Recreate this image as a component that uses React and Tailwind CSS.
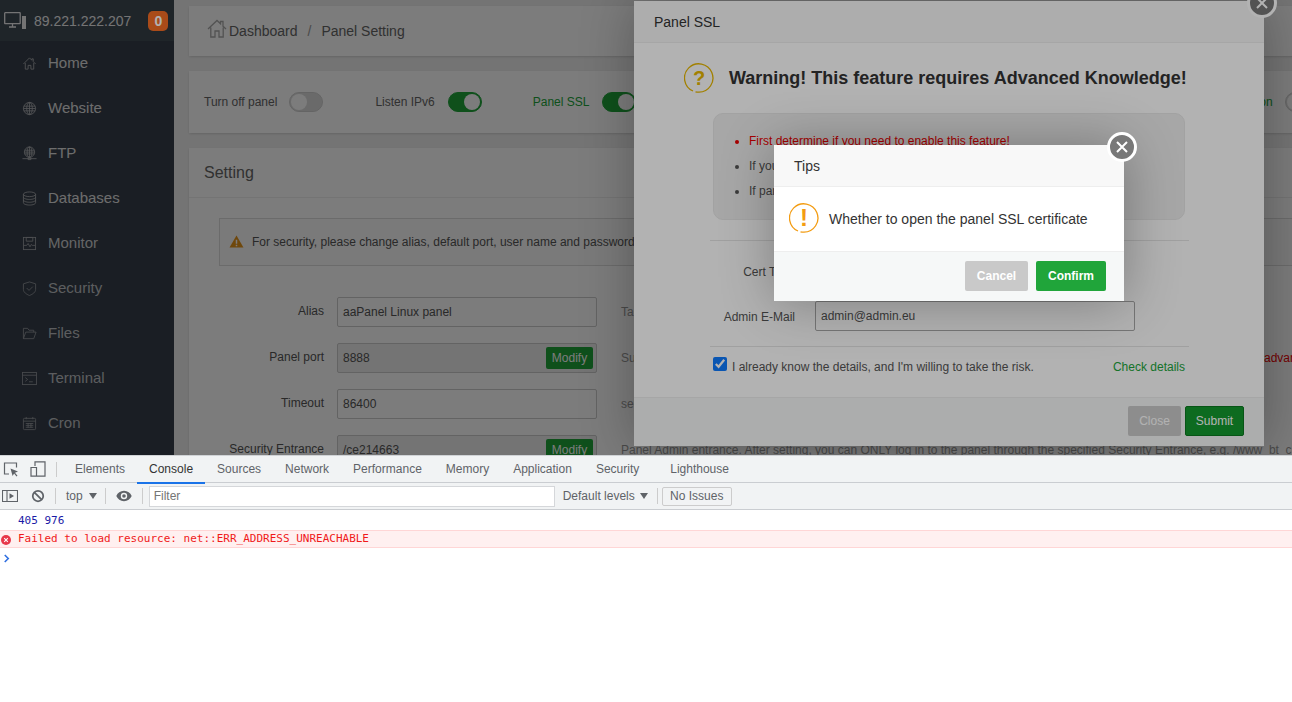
import React from 'react';

// sidebar icons, thin strokes like the panel's own set
const NavIcon = ({ name }) => {
  const paths = {
    home: <path d="M1.5 8.5 8 2l2.5 2.5V3H12v3l2.5 2.5M3.5 7.5V14h3v-4h3v4h3V7.5" />,
    website: (
      <>
        <circle cx="8" cy="8" r="6.5" />
        <ellipse cx="8" cy="8" rx="3" ry="6.5" />
        <path d="M8 1.5v13M2 5.5h12M1.5 8h13M2 10.5h12" />
      </>
    ),
    ftp: (
      <>
        <circle cx="8" cy="6.5" r="5.5" />
        <ellipse cx="8" cy="6.5" rx="2.5" ry="5.5" />
        <path d="M8 1v11M3 4.5h10M2.5 6.5h11M3 8.5h10M.5 13.5h15M6.5 12.5h3v2h-3z" />
      </>
    ),
    db: (
      <>
        <ellipse cx="8" cy="3.5" rx="6.5" ry="2.5" />
        <path d="M1.5 3.5v9c0 1.4 2.9 2.5 6.5 2.5s6.5-1.1 6.5-2.5v-9M1.5 6.5C1.5 7.9 4.4 9 8 9s6.5-1.1 6.5-2.5M1.5 9.5c0 1.4 2.9 2.5 6.5 2.5s6.5-1.1 6.5-2.5" />
      </>
    ),
    monitor: (
      <>
        <rect x="1.5" y="1.5" width="13" height="13" />
        <path d="M4.5 1.5h7v4h-7zM2 10h3l1.5-2 2 3.5L10 9l1 1h3" />
      </>
    ),
    security: <path d="M8 1 14.5 3v6c0 3-3 5-6.5 6.5C4.500 14 1.500 12 1.500 9V3zM5 7.500l2.500 2.500L11.500 6" />,
    files: <path d="M1.500 13.500v-11h4.500l1.500 2h5v2M1.500 13.500l2.500-7h11l-2.500 7z" />,
    terminal: (
      <>
        <rect x=".5" y="1.500" width="15" height="13" />
        <path d="M.5 4.500h15M3.500 7l2.500 2-2.500 2M7.500 11.500h4" />
      </>
    ),
    cron: (
      <>
        <rect x="1.500" y="2.500" width="13" height="12" rx="1" />
        <path d="M1.500 5.500h13M4.500 1v2.500M11.500 1v2.500M4 8h8M4 10h8M4 12h8M6.500 7.500v5M9.500 7.500v5" />
      </>
    ),
  };
  return (
    <svg viewBox="0 0 16 16" className="w-[15px] h-[15px] shrink-0 opacity-70" fill="none" stroke="currentColor" strokeWidth="0.9">
      {paths[name]}
    </svg>
  );
};

const navItems = [
  ['home', 'Home', 'text-[#e0e0e0]'],
  ['website', 'Website', 'text-[#e0e0e0]'],
  ['ftp', 'FTP', 'text-[#e0e0e0]'],
  ['db', 'Databases', 'text-[#e0e0e0]'],
  ['monitor', 'Monitor', 'text-[#cfd0d2]'],
  ['security', 'Security', 'text-[#bfc1c4]'],
  ['files', 'Files', 'text-[#bfc1c4]'],
  ['terminal', 'Terminal', 'text-[#bfc1c4]'],
  ['cron', 'Cron', 'text-[#bfc1c4]'],
];

const Toggle = ({ on, className = '' }) => (
  <span
    className={`relative inline-block w-[34px] h-[20px] rounded-full border shrink-0 ${
      on ? 'bg-[#20a53a] border-[#20a53a]' : 'bg-[#dcdcdc] border-[#cfcfcf]'
    } ${className}`}
  >
    <span className={`absolute top-px w-[16px] h-[16px] rounded-full bg-white ${on ? 'right-px' : 'left-px'}`}></span>
  </span>
);

const FormRow = ({ label, value, disabled, hint }) => (
  <div className="flex items-center h-[30px] mb-4 text-xs">
    <label className="w-[105px] text-right text-[#555] -mt-[2px] whitespace-nowrap">{label}</label>
    <div className={`relative ml-[13px] w-[260px] h-[30px] border border-[#ccc] rounded-[2px] flex items-center pl-[5px] text-[#555] ${disabled ? 'bg-[#eee]' : 'bg-white'}`}>
      {value}
      {disabled && (
        <span className="absolute right-[3px] top-[3px] h-[22px] w-[47px] rounded-[2px] bg-[#20a53a] text-white flex items-center justify-center">
          Modify
        </span>
      )}
    </div>
    <div className="ml-6 text-[#999] whitespace-nowrap">{hint}</div>
  </div>
);

// the layer style ring icon, gap at bottom left
const RingIcon = ({ color, mark, markClass }) => (
  <span className="relative w-[30px] h-[30px] shrink-0 flex items-center justify-center">
    <svg viewBox="0 0 30 30" className="absolute inset-0 w-[30px] h-[30px]" fill="none" stroke={color} strokeWidth="1.300">
      <path d="M9 28A14.200 14.200 0 1 1 15 29.200c-1.500 0-2.500-.1-3.500-.4" />
    </svg>
    <span className={`relative leading-none font-bold ${markClass}`} style={{ color }}>{mark}</span>
  </span>
);

const CloseDot = ({ className }) => (
  <span className={`absolute w-[30px] h-[30px] rounded-full bg-[#787878] border-[3px] border-white flex items-center justify-center ${className}`}>
    <svg viewBox="0 0 14 14" className="w-[14px] h-[14px]" fill="none" stroke="white" strokeWidth="2">
      <path d="M2 2l10 10M12 2 2 12" />
    </svg>
  </span>
);

const tabs = ['Elements', 'Console', 'Sources', 'Network', 'Performance', 'Memory', 'Application', 'Security'];

const DevTools = () => (
  <div className="flex-1 bg-white text-xs text-[#5f6368] border-t border-[#d0d3d6]">
    <div className="h-[27px] bg-[#f1f3f4] border-b border-[#cacdd1] flex items-stretch">
      <div className="flex items-center w-[57px] shrink-0 pl-[3px] gap-[11px] relative">
        <svg viewBox="0 0 16 16" className="w-[16px] h-[16px]" fill="none" stroke="#5f6368" strokeWidth="1.200">
          <path d="M6 13H1.500V2h12v4.500" />
          <path d="M7.500 7.500 15 10.500l-3 1.200 2.500 3-1 .8-2.400-3-1.500 2.500z" fill="#5f6368" stroke="none" />
        </svg>
        <svg viewBox="0 0 16 16" className="w-[16px] h-[16px]" fill="none" stroke="#5f6368" strokeWidth="1.200">
          <path d="M5 5V.8h10v14.400H1V6.500h5.500v8.700" />
        </svg>
        <span className="absolute right-0 top-[6px] h-[15px] w-px bg-[#ccc]"></span>
      </div>
      <div className="flex ml-[6px]">
        {tabs.map((t) => (
          <span
            key={t}
            className={`px-3 flex items-center ${t === 'Console' ? 'text-[#333] border-b-2 border-[#1a73e8] h-[28px]' : ''}`}
          >
            {t}
          </span>
        ))}
        <span className="ml-[7px] px-3 flex items-center">Lighthouse</span>
      </div>
    </div>
    <div className="h-[27px] bg-[#f1f3f4] border-b border-[#cacdd1] flex items-center">
      <svg viewBox="0 0 16 16" className="w-[16px] h-[16px] ml-[2px]" fill="none" stroke="#5f6368" strokeWidth="1.100">
        <path d="M.5 2.500h15v11H.5zM5 2.500v11" />
        <path d="M7.500 5.200v5.600L12 8z" fill="#5f6368" stroke="none" />
      </svg>
      <svg viewBox="0 0 16 16" className="w-[14px] h-[14px] ml-[13px]" fill="none" stroke="#5f6368" strokeWidth="2">
        <circle cx="8" cy="8" r="6" />
        <path d="M3.800 3.800l8.400 8.400" />
      </svg>
      <span className="ml-[10px] h-[16px] w-px bg-[#ccc]"></span>
      <span className="ml-[10px]">top</span>
      <span className="ml-[6px] w-0 h-0 border-x-[4px] border-x-transparent border-t-[6px] border-t-[#5f6368]"></span>
      <span className="ml-[8px] h-[16px] w-px bg-[#ccc]"></span>
      <svg viewBox="0 0 16 12" className="w-[16px] h-[12px] ml-[10px]" fill="#5f6368">
        <path d="M8 .8C4.500.8 1.600 2.900.3 6c1.300 3.100 4.200 5.200 7.700 5.200s6.400-2.100 7.700-5.200C14.400 2.900 11.500.8 8 .8zm0 8.400a3.200 3.200 0 1 1 0-6.400 3.200 3.200 0 0 1 0 6.400zM8 4.200a1.800 1.800 0 1 0 0 3.600 1.800 1.800 0 0 0 0-3.600z" />
      </svg>
      <span className="ml-[10px] h-[16px] w-px bg-[#ccc]"></span>
      <div className="ml-[6px] w-[406px] h-[21px] bg-white border border-[#d5d7da] flex items-center pl-[4px] text-[#757575]">Filter</div>
      <span className="ml-2">Default levels</span>
      <span className="ml-[5px] w-0 h-0 border-x-[4px] border-x-transparent border-t-[6px] border-t-[#5f6368]"></span>
      <span className="ml-[9px] h-[16px] w-px bg-[#ccc]"></span>
      <span className="ml-[4px] h-[19px] w-[70px] border border-[#ccc] rounded-[2px] flex items-center justify-center">No Issues</span>
    </div>
    <div className="font-['DejaVu_Sans_Mono',monospace] text-[11px]">
      <div className="h-[20px] pl-[18px] pt-[2px] flex items-center text-[#1a1aa6]">405 976</div>
      <div className="h-[18px] pl-[1px] pt-px flex items-center bg-[#fff0f0] border-y border-[#ffd6d6] text-[#f01a1a]">
        <svg viewBox="0 0 10 10" className="w-[10px] h-[10px] shrink-0">
          <circle cx="5" cy="5" r="5" fill="#e8384a" />
          <path d="M3.200 3.200l3.600 3.600M6.800 3.200 3.200 6.800" stroke="white" strokeWidth="1.100" />
        </svg>
        <span className="ml-[7px]">Failed to load resource: net::ERR_ADDRESS_UNREACHABLE</span>
      </div>
      <div className="h-[20px] pl-[3px] flex items-center">
        <svg viewBox="0 0 8 10" className="w-[7px] h-[9px]" fill="none" stroke="#2f6fe0" strokeWidth="1.800">
          <path d="M2 1l4 4-4 4" />
        </svg>
      </div>
    </div>
  </div>
);

const App = () => {
  return (
    <div className="w-[1292px] h-[702px] flex flex-col overflow-hidden bg-white font-['Liberation_Sans',sans-serif]">
      <div className="relative h-[455px] shrink-0 overflow-hidden flex bg-[#f0f0f0]">
        {/* sidebar */}
        <aside className="w-[174px] shrink-0 bg-[#373f4b]">
          <div className="h-[41px] bg-[#414c57] flex items-center pl-[4px]">
            <svg viewBox="0 0 22 17" className="w-[22px] h-[17px]" fill="none" stroke="#f0f0f0" strokeWidth="1.300">
              <rect x=".7" y=".7" width="15.500" height="11" rx=".5" />
              <path d="M5 15h7" strokeWidth="1.500" />
              <path d="M8.500 12v3" />
              <rect x="18" y="4" width="4" height="13" fill="#f0f0f0" stroke="none" />
            </svg>
            <span className="ml-[8px] text-sm text-[#f0f0f0]">89.221.222.207</span>
            <span className="relative z-[11] ml-[17px] w-[20px] h-[20px] rounded-[5px] bg-[#f26c25] text-white font-bold text-sm flex items-center justify-center">0</span>
          </div>
          <nav>
            {navItems.map(([icon, label, color]) => (
              <div key={label} className={`h-[45px] flex items-center pl-[22px] gap-[11px] text-[15px] ${color}`}>
                <NavIcon name={icon} />
                {label}
              </div>
            ))}
          </nav>
        </aside>

        {/* page */}
        <main className="flex-1 min-w-0 pl-[15px] pt-[6px] text-[#666]">
          <div className="w-[1400px]">
            <div className="h-[50px] bg-white shadow-sm flex items-center pl-[18px] text-sm">
              <svg viewBox="0 0 20 19" className="w-[20px] h-[19px] -mt-[5px]" fill="none" stroke="#aaa" strokeWidth="1.300">
                <path d="M1 10 10 1.500l3.500 3.300V2.500H16v4.700L19 10M3.800 8.500V18H8v-6h4v6h4.200V8.500" />
              </svg>
              <span className="ml-[2px]">Dashboard</span>
              <span className="ml-[10px] text-[#999]">/</span>
              <span className="ml-[10px]">Panel Setting</span>
            </div>

            <div className="mt-[15px] h-[62px] bg-white shadow-sm flex items-center pl-[15px] text-xs">
              <span>Turn off panel</span>
              <Toggle className="ml-[12px]" />
              <span className="ml-[52px]">Listen IPv6</span>
              <Toggle on className="ml-[13px]" />
              <span className="ml-[51px] text-[#20a53a]">Panel SSL</span>
              <Toggle on className="ml-[13px]" />
              <span className="ml-[504px] text-[#20a53a] whitespace-nowrap">BasicAuth authentication</span>
              <Toggle className="ml-3" />
            </div>

            <div className="mt-[15px] h-[400px] bg-white shadow-sm">
              <div className="h-[50px] border-b border-[#eee] flex items-center pl-[15px] text-base">Setting</div>
              <div className="pt-[20px] pl-[30px]">
                <div className="h-[48px] border border-[#ddd] bg-[#fbfbfb] flex items-center pl-[9px] mr-[30px] text-xs text-[#555]">
                  <svg viewBox="0 0 16 14" className="w-[15px] h-[13px] -mt-[2px]">
                    <path d="M8 .5 15.500 13.500H.5z" fill="#e6941a" />
                    <path d="M7.200 5h1.600v4.500H7.200zM7.200 10.500h1.600V12H7.200z" fill="white" />
                  </svg>
                  <span className="ml-[8px]">For security, please change alias, default port, user name and password</span>
                </div>
                <div className="mt-[31px]">
                  <FormRow label="Alias" value="aaPanel Linux panel" hint="Tag of this panel" />
                  <FormRow
                    label="Panel port"
                    value="8888"
                    disabled
                    hint={
                      <span className="flex">
                        <span className="w-[643px]">Suggested port range 8888 to 65535, note: if the server has a security group, please release it in</span>
                        <span className="text-[#e00]">advance</span>
                      </span>
                    }
                  />
                  <FormRow label="Timeout" value="86400" hint="seconds" />
                  <FormRow
                    label="Security Entrance"
                    value="/ce214663"
                    disabled
                    hint="Panel Admin entrance. After setting, you can ONLY log in to the panel through the specified Security Entrance, e.g. /www_bt_cn"
                  />
                </div>
              </div>
            </div>
          </div>
        </main>

        {/* first layer shade */}
        <div className="absolute inset-0 z-10 bg-black/30"></div>

        {/* Panel SSL dialog */}
        <div className="absolute z-20 left-[634px] top-px w-[630px] h-[445px] bg-white text-[#555] shadow-[1px_1px_50px_rgba(0,0,0,0.3)] flex flex-col">
          <div className="h-[42px] shrink-0 bg-[#f8f8f8] border-b border-[#eee] flex items-center pl-5 text-sm text-[#333]">Panel SSL</div>
          <CloseDot className="-right-[13px] -top-[13px]" />
          <div className="pt-[20px] pl-[50px] flex items-center gap-[15px]">
            <RingIcon color="#e8b800" mark="?" markClass="text-xl" />
            <h3 className="text-lg font-bold text-[#333] whitespace-nowrap">Warning! This feature requires Advanced Knowledge!</h3>
          </div>
          <div className="mt-5 ml-[79px] w-[472px] h-[107px] rounded-[10px] border border-[#e8e8e8] bg-[#f0f0f0] overflow-hidden">
            <ul className="list-disc pl-[35px] pt-[15px] text-xs leading-[25px] whitespace-nowrap">
              <li className="text-[#e00]">First determine if you need to enable this feature!</li>
              <li>If you have no certificate, the browser will warn you on access</li>
              <li>If panel cannot be accessed after enabling, check the docs</li>
            </ul>
          </div>
          <div className="mt-5 ml-[76px] w-[479px] border-t border-[#e5e5e5]"></div>
          <div className="mt-[16px] flex items-center text-xs">
            <label className="w-[161px] text-right">Cert Type</label>
            <div className="ml-5 w-[290px] h-[30px] border border-[#ccc] rounded-[2px]"></div>
          </div>
          <div className="mt-[14px] flex items-center text-xs">
            <label className="w-[161px] text-right pt-[2px]">Admin E-Mail</label>
            <div className="ml-5 w-[320px] h-[30px] border border-[#aaa] rounded-[2px] flex items-center pl-[5px]">admin@admin.eu</div>
          </div>
          <div className="mt-[15px] ml-[76px] w-[479px] border-t border-[#e5e5e5]"></div>
          <div className="mt-[10px] ml-[79px] w-[472px] flex items-start text-xs">
            <input type="checkbox" defaultChecked className="w-[14px] h-[14px] accent-[#0f7bff]" />
            <span className="ml-[5px] pt-[2px]">I already know the details, and I'm willing to take the risk.</span>
            <span className="ml-auto pt-[2px] text-[#20a53a]">Check details</span>
          </div>
          <div className="mt-auto h-[49px] shrink-0 bg-[#f6f8f8] border-t border-[#eee] flex items-start justify-end pt-[8px] pr-5 gap-[4px] text-xs text-white">
            <span className="w-[53px] h-[30px] rounded-[2px] bg-[#cbcbcb] flex items-center justify-center">Close</span>
            <span className="w-[59px] h-[30px] rounded-[2px] bg-[#139a2e] border border-[#0b7a20] flex items-center justify-center">Submit</span>
          </div>
        </div>

        {/* second layer shade */}
        <div className="absolute inset-0 z-30 bg-black/30"></div>

        {/* Tips dialog */}
        <div className="absolute z-40 left-[774px] top-[145px] w-[350px] h-[156px] bg-white shadow-[1px_1px_50px_rgba(0,0,0,0.3)] flex flex-col">
          <div className="h-[42px] shrink-0 bg-[#f8f8f8] border-b border-[#eee] flex items-center pl-5 text-sm text-[#333]">Tips</div>
          <CloseDot className="-right-[13px] -top-[13px]" />
          <div className="h-[64px] shrink-0 flex items-center pl-[15px] pb-[2px] gap-[10px] text-sm text-[#333]">
            <RingIcon color="#f39c12" mark="!" markClass="text-2xl" />
            <span className="pt-px">Whether to open the panel SSL certificate</span>
          </div>
          <div className="flex-1 bg-[#f6f8f8] border-t border-[#eee] flex items-start justify-end pt-[9px] pr-[18px] gap-[8px] text-xs font-bold text-white">
            <span className="w-[63px] h-[30px] rounded-[2px] bg-[#c9c9c9] flex items-center justify-center">Cancel</span>
            <span className="w-[70px] h-[30px] rounded-[2px] bg-[#20a53a] flex items-center justify-center">Confirm</span>
          </div>
        </div>
      </div>

      <DevTools />
    </div>
  );
};

export default App;
